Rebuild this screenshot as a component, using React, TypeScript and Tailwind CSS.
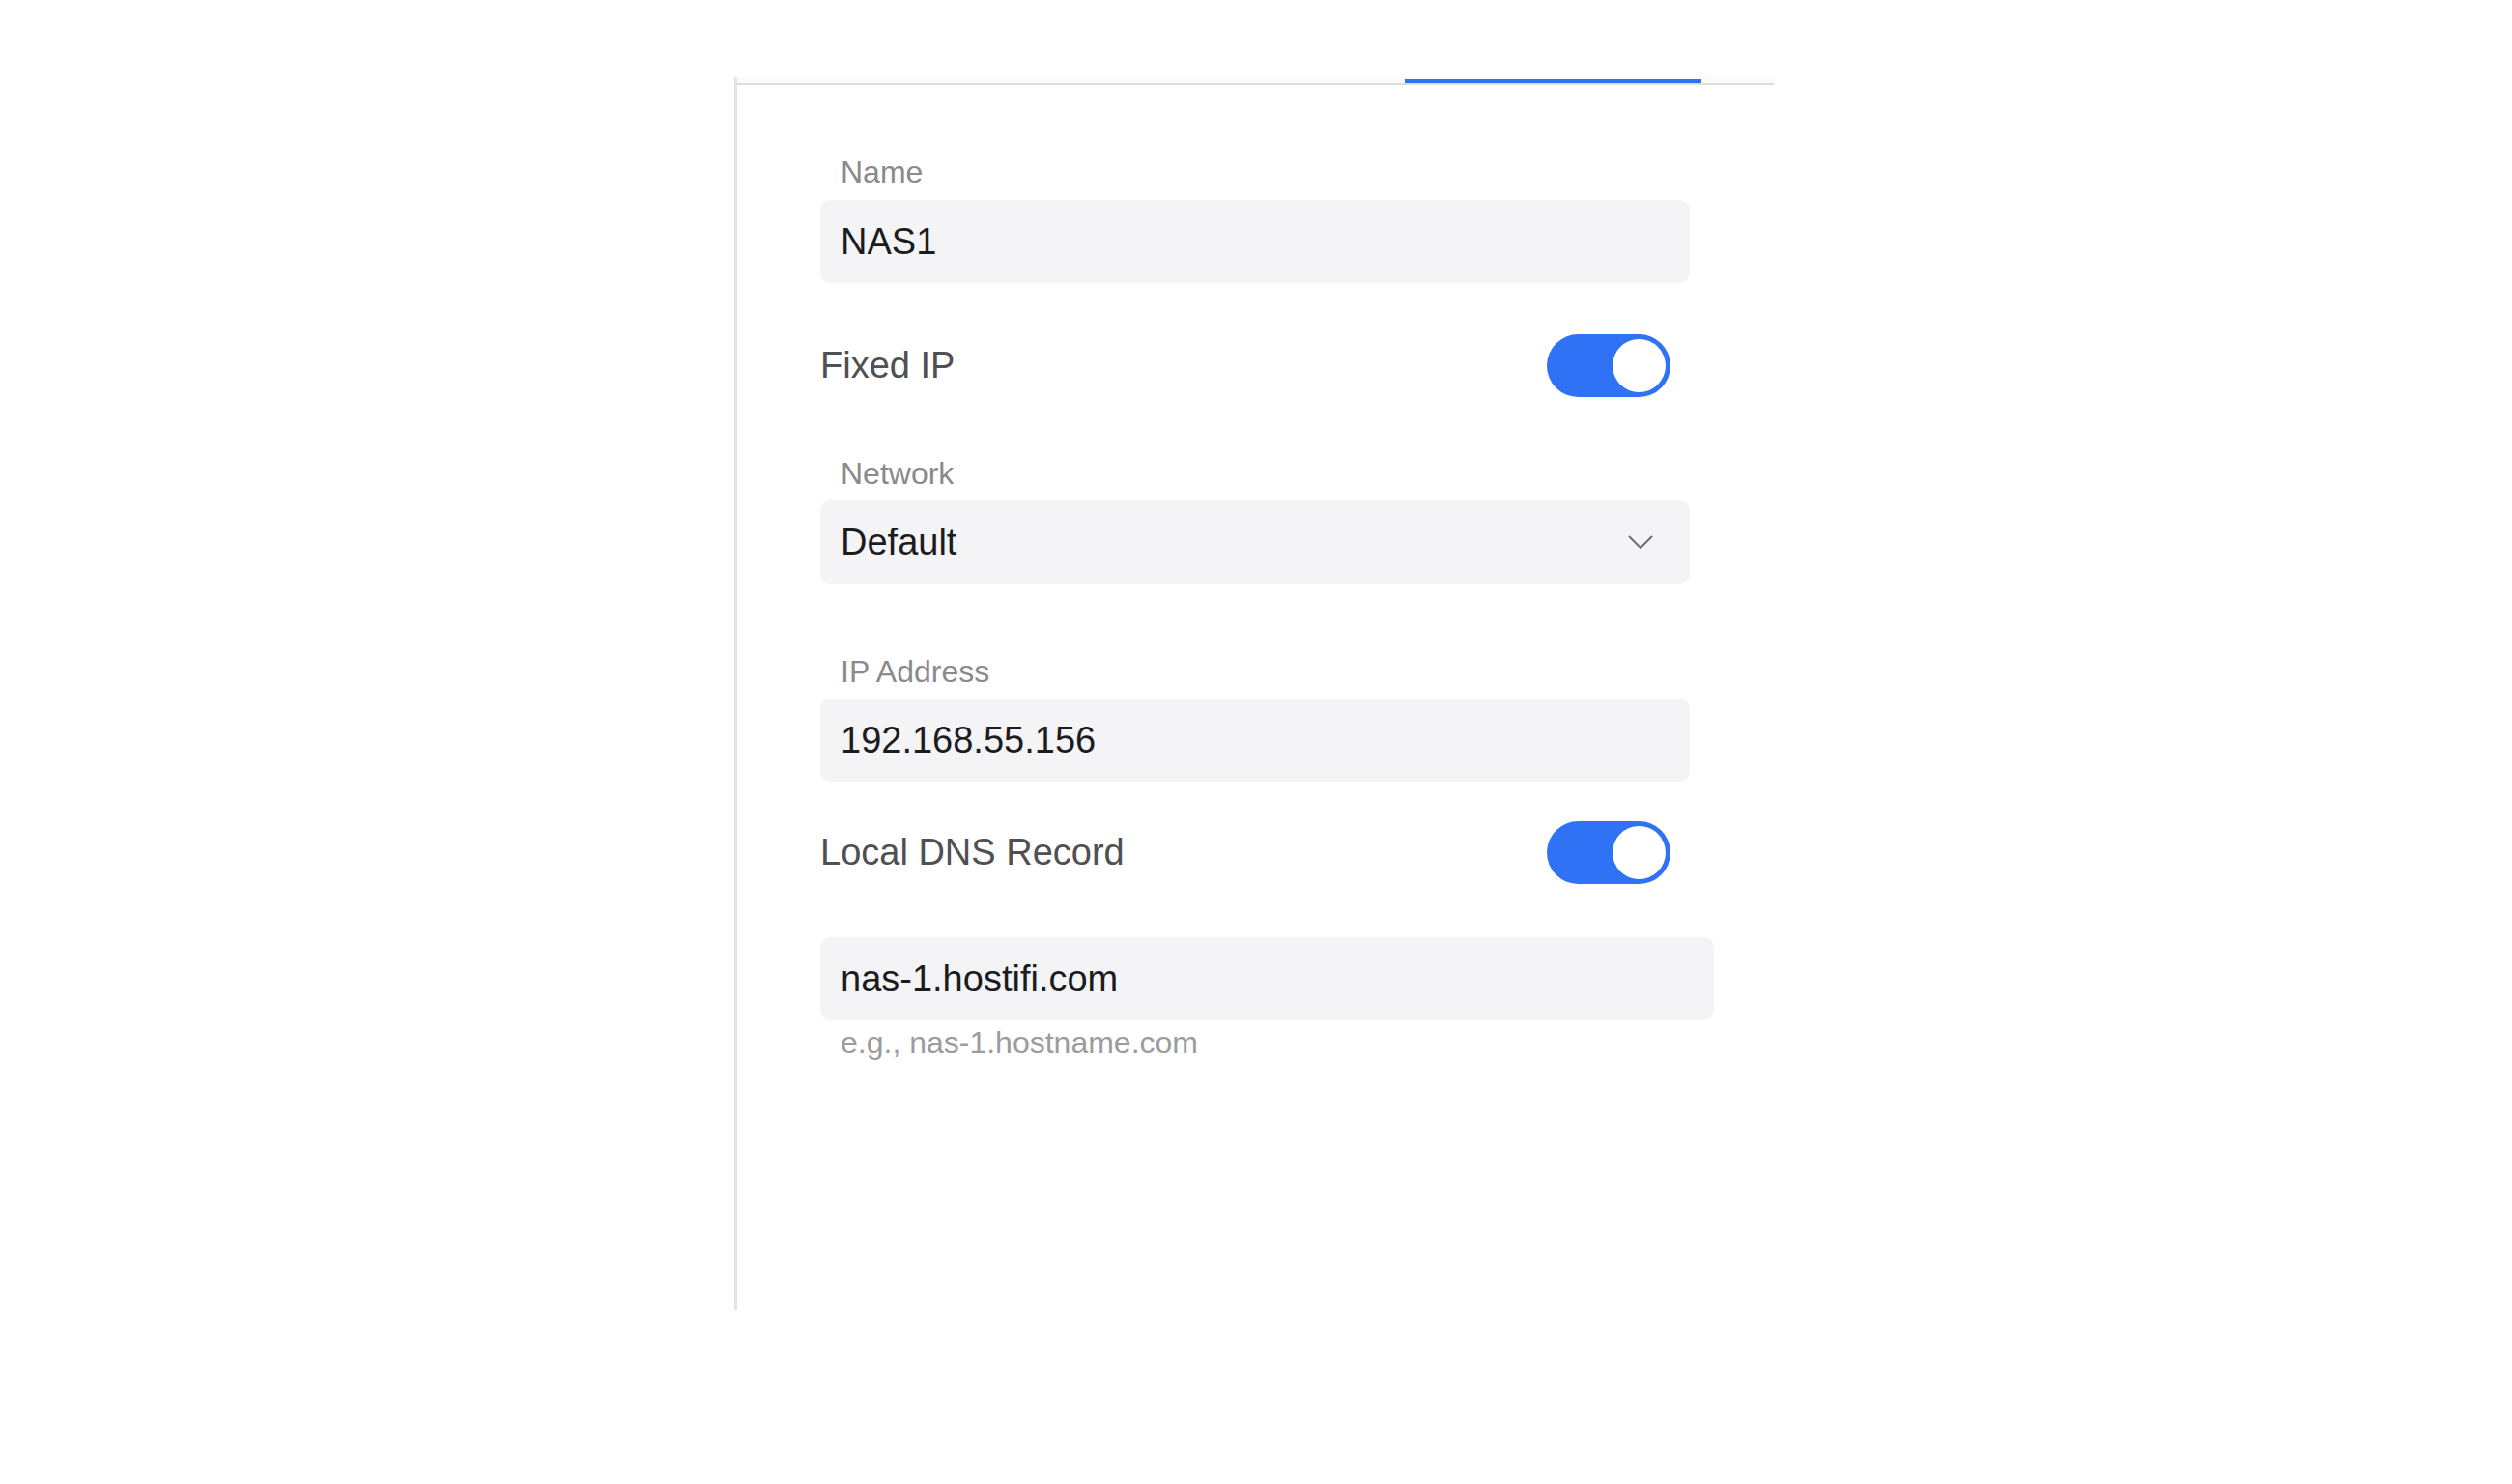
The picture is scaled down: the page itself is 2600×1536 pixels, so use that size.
const font = { fontFamily: '"Liberation Sans", Arial, Helvetica, sans-serif' };

function Toggle() {
  return (
    <span className="flex h-[65px] w-[128px] items-center justify-end rounded-full bg-[#3072f5] pr-[5px]">
      <span className="h-[55px] w-[55px] rounded-full bg-white" />
    </span>
  );
}

function Chevron() {
  return (
    <svg aria-hidden="true" width="26" height="15" viewBox="0 0 26 15" fill="none">
      <path d="M1.5 1.5 13 13 24.5 1.5" stroke="#6e6e78" strokeWidth="2" strokeLinecap="round" strokeLinejoin="round" />
    </svg>
  );
}

function Label({ children }: { children: string }) {
  return <div className="h-[40px] pl-[21px] text-[32px] leading-[40px] text-[#8a8a8a]">{children}</div>;
}

function Field({ value, wide }: { value: string; wide?: boolean }) {
  return (
    <div
      className={`flex h-[86px] items-center rounded-[10px] bg-[#f4f4f6] px-[21px] text-[38px] text-[#1c1c1e] ${
        wide ? "w-[925px]" : "w-[900px]"
      }`}
    >
      {value}
    </div>
  );
}

function SwitchRow({ label }: { label: string }) {
  return (
    <div className="flex h-[66px] w-[900px] items-center justify-between pr-[20px]">
      <span className="text-[38px] text-[#505052]">{label}</span>
      <Toggle />
    </div>
  );
}

export default function App() {
  return (
    <div className="min-h-screen bg-white" style={font}>
      <div className="ml-[760px] w-[1076px] pt-[80px]">
        <div className="h-[1276px] border-l-[3px] border-[#e4e4e4]">
          <div className="flex h-[8px] border-b-2 border-[#dcdcdc] bg-[#fbfbfb]">
            <span className="ml-[691px] mt-[2px] h-[4px] w-[307px] bg-[#3072f5]" />
          </div>

          <form className="flex flex-col pl-[86px] pt-[70px]">
            <Label>Name</Label>
            <div className="mt-[9px]">
              <Field value="NAS1" />
            </div>

            <div className="mt-[52px]">
              <SwitchRow label="Fixed IP" />
            </div>

            <div className="mt-[59px]">
              <Label>Network</Label>
            </div>
            <div className="mt-[8px] flex h-[86px] w-[900px] items-center justify-between rounded-[10px] bg-[#f4f4f6] pl-[21px] pr-[38px]">
              <span className="text-[38px] text-[#1c1c1e]">Default</span>
              <Chevron />
            </div>

            <div className="mt-[71px]">
              <Label>IP Address</Label>
            </div>
            <div className="mt-[8px]">
              <Field value="192.168.55.156" />
            </div>

            <div className="mt-[40px]">
              <SwitchRow label="Local DNS Record" />
            </div>

            <div className="mt-[55px]">
              <Field value="nas-1.hostifi.com" wide />
            </div>
            <div className="mt-[3px]">
              <div className="h-[40px] pl-[21px] text-[32px] leading-[40px] text-[#9c9c9c]">e.g., nas-1.hostname.com</div>
            </div>
          </form>
        </div>
      </div>
    </div>
  );
}
